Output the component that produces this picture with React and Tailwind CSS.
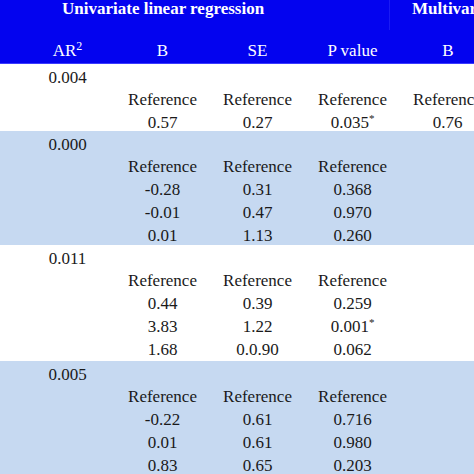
import React from "react";

const sections = [
  {
    ar: "0.004",
    bg: "bg-white",
    h: "h-[67px]",
    rows: [
      ["Reference", "Reference", "Reference", "Reference"],
      ["0.57", "0.27", ["0.035", "*"], "0.76"],
    ],
  },
  {
    ar: "0.000",
    bg: "bg-[#c6d9f1]",
    h: "h-[114px]",
    rows: [
      ["Reference", "Reference", "Reference", ""],
      ["-0.28", "0.31", "0.368", ""],
      ["-0.01", "0.47", "0.970", ""],
      ["0.01", "1.13", "0.260", ""],
    ],
  },
  {
    ar: "0.011",
    bg: "bg-white",
    h: "h-[116px]",
    rows: [
      ["Reference", "Reference", "Reference", ""],
      ["0.44", "0.39", "0.259", ""],
      ["3.83", "1.22", ["0.001", "*"], ""],
      ["1.68", "0.0.90", "0.062", ""],
    ],
  },
  {
    ar: "0.005",
    bg: "bg-[#c6d9f1]",
    h: "h-[116px]",
    rows: [
      ["Reference", "Reference", "Reference", ""],
      ["-0.22", "0.61", "0.716", ""],
      ["0.01", "0.61", "0.980", ""],
      ["0.83", "0.65", "0.203", ""],
    ],
  },
];

function Cell({ value }) {
  if (Array.isArray(value)) {
    return (
      <div className="text-center whitespace-nowrap">
        {value[0]}
        <sup className="text-[11px] top-[-6px]">{value[1]}</sup>
      </div>
    );
  }
  return <div className="text-center whitespace-nowrap">{value}</div>;
}

export default function App() {
  return (
    <div
      className="w-[474px] h-[474px] overflow-hidden bg-white text-[17px] text-[#1a1a1a]"
      style={{ fontFamily: '"Liberation Serif", "Times New Roman", serif' }}
    >
      <div className="w-[560px]">
        <div className="bg-[#0303ef] text-white border-b border-[#3b3bff]">
          <div className="flex h-[30px] leading-[18px] font-bold whitespace-nowrap">
            <div className="w-[390px] shrink-0 pl-[62px] border-r border-[#1a1af5]">Univariate linear regression</div>
            <div className="shrink-0 pl-[22px]">Multivariate linear regression</div>
          </div>
          <div className="grid grid-cols-[20px_95px_95px_95px_95px_95px] h-[33px] items-end leading-[22px] pb-[1px]">
            <div />
            <div className="text-center">
              AR<sup className="text-[12px] top-[-6px]">2</sup>
            </div>
            <div className="text-center">B</div>
            <div className="text-center">SE</div>
            <div className="text-center">P value</div>
            <div className="text-center pl-[1px]">B</div>
          </div>
        </div>
        {sections.map((s, i) => (
          <div key={i} className={`${s.bg} ${s.h} pt-[2.5px] leading-[22.75px]`}>
            <div className="grid grid-cols-[20px_95px_95px_95px_95px_95px]">
              <div />
              <div className="text-center">{s.ar}</div>
            </div>
            {s.rows.map((r, j) => (
              <div key={j} className="grid grid-cols-[20px_95px_95px_95px_95px_95px]">
                <div />
                <div />
                {r.map((v, k) => (
                  <Cell key={k} value={v} />
                ))}
              </div>
            ))}
          </div>
        ))}
      </div>
    </div>
  );
}
